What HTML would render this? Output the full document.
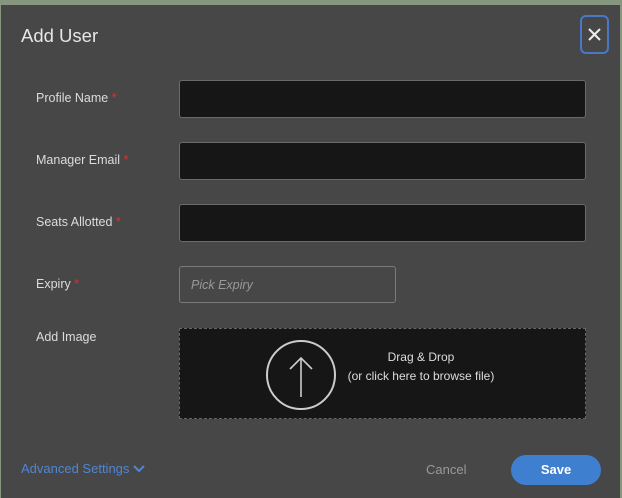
<!DOCTYPE html>
<html><head><style>
*{box-sizing:border-box;margin:0;padding:0}
body{width:622px;height:498px;background:#86967f;font-family:"Liberation Sans",sans-serif;position:relative;overflow:hidden}
.m{position:absolute;left:1px;top:5px;width:619px;height:493px;background:#474747}
.t{position:absolute;left:21px;top:25px;color:#e6e6e6;font-size:18.5px}
.x{position:absolute;left:580px;top:15px;width:29px;height:39px;border:2px solid #4a78c4;border-radius:6px}
.l{position:absolute;left:36px;color:#dcdcdc;font-size:12.5px}
.l b{color:#e0302c;font-weight:normal}
.i{position:absolute;left:179px;width:407px;height:38px;background:#161616;border:1px solid #6a6a6a;border-radius:3px}
.e{position:absolute;left:179px;top:266px;width:217px;height:37px;border:1px solid #7a7a7a;border-radius:3px;color:#999;font-style:italic;font-size:12.5px;padding:11px 11px}
.d{position:absolute;left:179px;top:328px;width:407px;height:91px;background:#161616;border:1px dashed #666}
.c{position:absolute;left:86px;top:11px;width:70px;height:70px;border:2px solid #ccc;border-radius:50%}
.dt{position:absolute;left:131px;top:19px;width:220px;text-align:center;color:#ddd;font-size:12px;line-height:19px}
.a{position:absolute;left:21px;top:461px;color:#4f86d6;font-size:13px}
.cn{position:absolute;left:426px;top:462px;color:#999;font-size:13px}
.s{position:absolute;left:511px;top:455px;width:90px;height:30px;background:#3f7fd0;border-radius:15px;color:#fff;font-size:13px;font-weight:bold;text-align:center;line-height:30px}
</style></head><body>
<div class="m"></div>
<div class="t">Add User</div>
<div class="x"><svg width="25" height="35" viewBox="0 0 25 35"><path d="M7 12l11 11M18 12L7 23" stroke="#eee" stroke-width="2" fill="none"/></svg></div>
<div class="l" style="top:91px">Profile Name <b>*</b></div>
<div class="i" style="top:80px"></div>
<div class="l" style="top:153px">Manager Email <b>*</b></div>
<div class="i" style="top:142px"></div>
<div class="l" style="top:215px">Seats Allotted <b>*</b></div>
<div class="i" style="top:204px"></div>
<div class="l" style="top:277px">Expiry <b>*</b></div>
<div class="e">Pick Expiry</div>
<div class="l" style="top:330px">Add Image</div>
<div class="d">
<div class="c"><svg width="66" height="66" viewBox="0 0 66 66"><path d="M33 55V16M22 27L33 16L44 27" stroke="#ccc" stroke-width="1.6" fill="none"/></svg></div>
<div class="dt">Drag &amp; Drop<br>(or click here to browse file)</div>
</div>
<div class="a">Advanced Settings <svg width="12" height="8" viewBox="0 0 12 8"><path d="M1 1l5 5 5-5" stroke="#4f86d6" stroke-width="2" fill="none"/></svg></div>
<div class="cn">Cancel</div>
<div class="s">Save</div>
</body></html>
